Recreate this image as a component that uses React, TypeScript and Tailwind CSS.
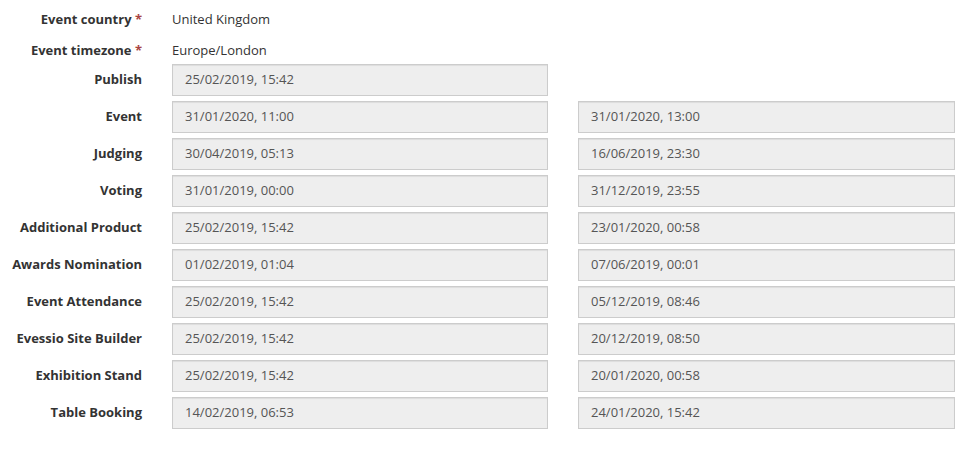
const rows: [string, string, string | null][] = [
  ['Publish', '25/02/2019, 15:42', null],
  ['Event', '31/01/2020, 11:00', '31/01/2020, 13:00'],
  ['Judging', '30/04/2019, 05:13', '16/06/2019, 23:30'],
  ['Voting', '31/01/2019, 00:00', '31/12/2019, 23:55'],
  ['Additional Product', '25/02/2019, 15:42', '23/01/2020, 00:58'],
  ['Awards Nomination', '01/02/2019, 01:04', '07/06/2019, 00:01'],
  ['Event Attendance', '25/02/2019, 15:42', '05/12/2019, 08:46'],
  ['Evessio Site Builder', '25/02/2019, 15:42', '20/12/2019, 08:50'],
  ['Exhibition Stand', '25/02/2019, 15:42', '20/01/2020, 00:58'],
  ['Table Booking', '14/02/2019, 06:53', '24/01/2020, 15:42'],
];

const DateBox = ({ value, wide }: { value: string; wide?: boolean }) => (
  <div
    className={`${wide ? 'w-[377px]' : 'w-[376px]'} h-[32px] flex items-center pl-[12px] bg-[#eeeeee] border border-[#cccccc] shadow-[inset_0_1px_1px_rgba(0,0,0,0.075)] text-[13px] text-[#555555]`}
  >
    {value}
  </div>
);

export default function App() {
  return (
    <div className="w-[966px] h-[462px] bg-white font-['Open_Sans',sans-serif] text-[13px] text-[#333333]">
      <div className="flex flex-col pt-[8px]">
        <div className="flex items-center h-[24px]">
          <div className="w-[142px] text-right font-bold">
            Event country <span className="text-[#a94442]">*</span>
          </div>
          <div className="ml-[30px]">United Kingdom</div>
        </div>
        <div className="flex items-center h-[24px] mt-[7px]">
          <div className="w-[142px] text-right font-bold">
            Event timezone <span className="text-[#a94442]">*</span>
          </div>
          <div className="ml-[30px]">Europe/London</div>
        </div>
        <div className="flex flex-col gap-[5px] mt-[1px]">
          {rows.map(([label, start, end]) => (
            <div key={label} className="flex items-center">
              <div className="w-[142px] text-right font-bold">{label}</div>
              <div className="ml-[30px]">
                <DateBox value={start} />
              </div>
              {end && (
                <div className="ml-[30px]">
                  <DateBox value={end} wide />
                </div>
              )}
            </div>
          ))}
        </div>
      </div>
    </div>
  );
}
